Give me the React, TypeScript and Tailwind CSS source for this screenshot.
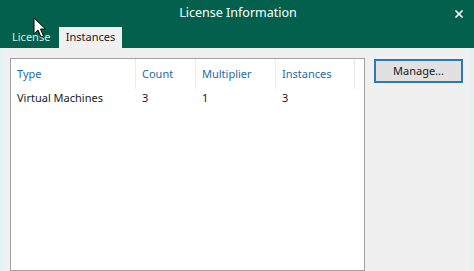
import { X } from 'lucide-react';

const COLUMNS = [
  { label: 'Type', width: 'w-[125px]' },
  { label: 'Count', width: 'w-[60px]' },
  { label: 'Multiplier', width: 'w-[80px]' },
  { label: 'Instances', width: 'w-[79px]' },
];

const ROWS = [['Virtual Machines', '3', '1', '3']];

function Cursor() {
  return (
    <svg className="absolute left-[33px] top-[17px] w-[13px] h-[21px]" viewBox="0 0 13 21">
      <path d="M1 1 L1 17 L5 13 L8 20 L10.5 19 L7.5 12 L12.5 12 Z" fill="#fff" stroke="#000" strokeWidth="1" strokeLinejoin="round" />
    </svg>
  );
}

export default function App() {
  return (
    <div className="relative w-[474px] h-[271px] overflow-hidden bg-[#f0f0f0] font-['Noto_Sans',sans-serif] text-[11px]">
      <div className="bg-[#03604c] h-[48px] flex flex-col">
        <div className="h-[27px] flex items-center relative">
          <span className="flex-1 text-center text-white text-[12.5px] pl-[2px]">License Information</span>
          <X className="absolute right-[9px] top-[8px] w-[12px] h-[12px] text-white" strokeWidth={3.5} />
        </div>
        <div className="flex items-end h-[21px] pl-[4px]">
          <span className="w-[55px] pl-[8px] h-[21px] flex items-center text-[#d6ece6]">License</span>
          <span className="w-[63px] h-[21px] flex items-center justify-center bg-[#f0f0f0] text-[#1a1a1a]">Instances</span>
        </div>
      </div>

      <div className="flex h-[223px] border-x-[3px] border-[#e0f4f1]">
        <div className="mt-[10px] ml-[7px] w-[355px] bg-white border border-[#a0a0a0]">
          <div className="flex h-[30px] items-center">
            {COLUMNS.map((c) => (
              <div key={c.label} className={`${c.width} h-full flex items-center pl-[6px] text-[#1f6ba3] border-r border-[#eaeaea]`}>
                {c.label}
              </div>
            ))}
          </div>
          {ROWS.map((r) => (
            <div key={r[0]} className="flex h-[18px] items-center text-[#1a1a1a]">
              {r.map((v, i) => (
                <div key={i} className={`${COLUMNS[i].width} pl-[6px]`}>{v}</div>
              ))}
            </div>
          ))}
        </div>
        <div className="ml-[9px] mt-[11px]">
          <button className="w-[89px] h-[24px] bg-[#e1e1e1] border-2 border-[#2b79b4] text-[#1a1a1a] flex items-center justify-center">
            Manage...
          </button>
        </div>
      </div>

      <Cursor />
    </div>
  );
}
